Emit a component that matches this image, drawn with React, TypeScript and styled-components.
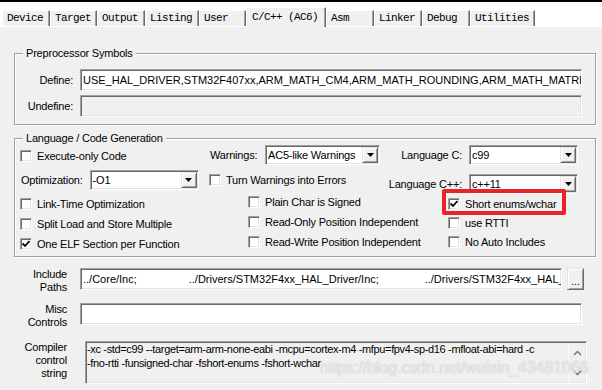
import React from 'react';
import styled, { createGlobalStyle, css } from 'styled-components';

const GlobalStyle = createGlobalStyle`
  html, body { margin: 0; padding: 0; background: #f0f0f0; }
  body {
    font-family: "Liberation Sans", Arial, sans-serif;
    font-size: 11px;
    color: #000;
  }
`;

const sunken = css`
  box-sizing: border-box;
  border-style: solid;
  border-width: 1px;
  border-color: #a0a0a0 #ffffff #ffffff #a0a0a0;
  box-shadow: inset 1px 1px 0 #696969, inset -1px -1px 0 #e3e3e3;
`;

const raised = css`
  box-sizing: border-box;
  border-style: solid;
  border-width: 1px;
  border-color: #e3e3e3 #696969 #696969 #e3e3e3;
  box-shadow: inset 1px 1px 0 #ffffff, inset -1px -1px 0 #a0a0a0;
  background: #f0f0f0;
`;

const Window = styled.div`
  position: relative;
  width: 602px;
  height: 390px;
  overflow: hidden;
  box-sizing: border-box;
  border-top: 2px solid #000;
  background: #f0f0f0;
  letter-spacing: -0.2px;
`;

const TabStrip = styled.div`
  display: flex;
  align-items: flex-end;
  height: 24px;
  padding-left: 2px;
  background: #fff;
`;

const Tab = styled.div<{ $w: number; $active?: boolean }>`
  position: relative;
  z-index: ${p => (p.$active ? 1 : 0)};
  box-sizing: border-box;
  width: ${p => p.$w}px;
  height: ${p => (p.$active ? 20 : 16)}px;
  margin-bottom: ${p => (p.$active ? -1 : 0)}px;
  padding: ${p => (p.$active ? '3px 0 0 5px' : '1px 0 0 4px')};
  background: #f0f0f0;
  border-left: 1px solid #fff;
  border-top: 1px solid #fff;
  border-right: 1px solid #696969;
  box-shadow: inset -1px 0 0 #a0a0a0;
  font-family: "Liberation Mono", "DejaVu Sans Mono", monospace;
  font-size: 11px;
  letter-spacing: -0.6px;
  line-height: 13px;
  white-space: nowrap;
`;

const Page = styled.div`
  border-top: 1px solid #fff;
  padding: 0 6px 0 14px;
`;

const Group = styled.div<{ $top: number }>`
  margin-top: ${p => p.$top}px;
  border: 1px solid #a0a0a0;
  box-shadow: inset 1px 1px 0 #fff, 1px 1px 0 #fff;
`;

const GroupTitle = styled.div`
  width: fit-content;
  margin: -8px 0 0 8px;
  padding: 0 3px;
  background: #f0f0f0;
  line-height: 14px;
`;

const SymbolGrid = styled.div`
  display: grid;
  grid-template-columns: 58px 502px;
  column-gap: 7px;
  row-gap: 4px;
  align-items: center;
  padding: 9px 0 7px 0;
`;

const Label = styled.div`
  text-align: right;
  white-space: nowrap;
`;

const TextBox = styled.div<{ $w: number; $disabled?: boolean }>`
  ${sunken};
  width: ${p => p.$w}px;
  height: 22px;
  padding: 0 2px;
  background: ${p => (p.$disabled ? '#f0f0f0' : '#fff')};
  line-height: 20px;
  letter-spacing: 0;
  white-space: pre;
  overflow: hidden;
`;

const Columns = styled.div`
  display: flex;
  padding: 0 0 2px 5px;
`;

const Column = styled.div<{ $w: number; $gap: number }>`
  display: flex;
  flex-direction: column;
  width: ${p => p.$w}px;
  margin-right: ${p => p.$gap}px;
`;

const ComboRow = styled.div<{ $end?: boolean; $top?: number }>`
  display: flex;
  align-items: center;
  justify-content: ${p => (p.$end ? 'flex-end' : 'space-between')};
  gap: 7px;
  margin-top: ${p => p.$top ?? 0}px;
  padding-left: 1px;
  white-space: nowrap;
`;

const Combo = styled.div<{ $w: number }>`
  ${sunken};
  display: flex;
  align-items: center;
  flex-shrink: 0;
  width: ${p => p.$w}px;
  height: 20px;
  background: #fff;
`;

const ComboText = styled.span`
  flex: 1;
  padding-left: 2px;
  white-space: nowrap;
  overflow: hidden;
`;

const DropButton = styled.div`
  ${raised};
  display: flex;
  align-items: center;
  justify-content: center;
  width: 16px;
  height: 16px;
  margin-right: 1px;
`;

const CheckRow = styled.div<{ $indent?: number; $h?: number; $top?: number }>`
  display: flex;
  align-items: center;
  gap: 5px;
  height: ${p => p.$h ?? 20}px;
  margin-left: ${p => p.$indent ?? 0}px;
  margin-top: ${p => p.$top ?? 0}px;
  white-space: nowrap;
`;

const Box = styled.div`
  ${sunken};
  display: flex;
  align-items: center;
  justify-content: center;
  flex-shrink: 0;
  width: 12px;
  height: 12px;
  background: #fff;
`;

const Marked = styled.div<{ $indent: number }>`
  position: relative;
  width: fit-content;
  margin-left: ${p => p.$indent}px;
  &::after {
    content: '';
    position: absolute;
    left: -6px;
    right: -10px;
    top: -5px;
    bottom: -2px;
    border: 4px solid #e8232b;
    border-radius: 2px;
  }
`;

const Fields = styled.div`
  display: grid;
  grid-template-columns: 53px 508px;
  column-gap: 13px;
  row-gap: 9px;
  margin-top: 11px;
`;

const FieldLabel = styled.div<{ $top?: number }>`
  text-align: right;
  line-height: 13px;
  margin-top: ${p => p.$top ?? 0}px;
`;

const FieldCell = styled.div<{ $top?: number }>`
  display: flex;
  gap: 5px;
  margin-top: ${p => p.$top ?? 0}px;
`;

const DotsButton = styled.div`
  ${raised};
  flex-shrink: 0;
  width: 17px;
  height: 22px;
  text-align: center;
  line-height: 24px;
  letter-spacing: 0;
`;

const ControlString = styled.div`
  ${sunken};
  display: flex;
  width: 502px;
  height: 43px;
  margin-left: 5px;
  background: #f0f0f0;
`;

const ControlText = styled.div`
  flex: 1;
  padding: 1px 0 0 1px;
  line-height: 13.5px;
  letter-spacing: -0.35px;
  white-space: nowrap;
  overflow: hidden;
`;

const ScrollBar = styled.div`
  display: flex;
  flex-direction: column;
  justify-content: space-between;
  align-items: center;
  width: 17px;
  margin: 1px 1px 1px 0;
  padding: 7px 0 6px;
  border-left: 1px solid #fafafa;
  box-sizing: border-box;
`;

const Watermark = styled.div`
  position: absolute;
  left: 320px;
  top: 357px;
  font-size: 16px;
  letter-spacing: -0.1px;
  white-space: nowrap;
  color: rgba(255, 255, 255, 0.75);
  text-shadow: 0 0 1px rgba(90, 90, 90, 0.5);
  pointer-events: none;
`;

const Arrow = () => (
  <svg width="7" height="4" viewBox="0 0 7 4">
    <polygon points="0,0 7,0 3.5,4" fill="#000" />
  </svg>
);

const Tick = () => (
  <svg width="8" height="8" viewBox="0 0 8 8">
    <path d="M0.5 3.5 L3 6 L7.5 1" fill="none" stroke="#000" strokeWidth="1.8" />
  </svg>
);

const Chevron = ({ up }: { up?: boolean }) => (
  <svg width="9" height="6" viewBox="0 0 9 6">
    <polyline
      points={up ? '1,5 4.5,1.5 8,5' : '1,1 4.5,4.5 8,1'}
      fill="none"
      stroke="#707070"
      strokeWidth="1.4"
    />
  </svg>
);

type CheckProps = { label: string; checked?: boolean; indent?: number; h?: number; top?: number };

const Check = ({ label, checked, indent, h, top }: CheckProps) => (
  <CheckRow $indent={indent} $h={h} $top={top}>
    <Box>{checked && <Tick />}</Box>
    <span>{label}</span>
  </CheckRow>
);

const Select = ({ w, value }: { w: number; value: string }) => (
  <Combo $w={w}>
    <ComboText>{value}</ComboText>
    <DropButton>
      <Arrow />
    </DropButton>
  </Combo>
);

const tabs = [
  { name: 'Device', w: 48 },
  { name: 'Target', w: 47 },
  { name: 'Output', w: 48 },
  { name: 'Listing', w: 54 },
  { name: 'User', w: 47 },
  { name: 'C/C++ (AC6)', w: 80, active: true },
  { name: 'Asm', w: 48 },
  { name: 'Linker', w: 48 },
  { name: 'Debug', w: 48 },
  { name: 'Utilities', w: 65 },
];

const includePaths =
  '../Core/Inc;                 ../Drivers/STM32F4xx_HAL_Driver/Inc;               ../Drivers/STM32F4xx_HAL_';

export default function App() {
  return (
    <Window>
      <GlobalStyle />
      <TabStrip>
        {tabs.map(t => (
          <Tab key={t.name} $w={t.w} $active={t.active}>
            {t.name}
          </Tab>
        ))}
      </TabStrip>
      <Page>
        <Group $top={26}>
          <GroupTitle>Preprocessor Symbols</GroupTitle>
          <SymbolGrid>
            <Label>Define:</Label>
            <TextBox $w={502}>
              USE_HAL_DRIVER,STM32F407xx,ARM_MATH_CM4,ARM_MATH_ROUNDING,ARM_MATH_MATRIX_CHECK
            </TextBox>
            <Label>Undefine:</Label>
            <TextBox $w={502} $disabled />
          </SymbolGrid>
        </Group>

        <Group $top={13}>
          <GroupTitle>Language / Code Generation</GroupTitle>
          <Columns>
            <Column $w={178} $gap={11}>
              <Check label="Execute-only Code" top={1} />
              <ComboRow $top={4}>
                <span>Optimization:</span>
                <Select w={109} value="-O1" />
              </ComboRow>
              <Check label="Link-Time Optimization" top={4} />
              <Check label="Split Load and Store Multiple" />
              <Check label="One ELF Section per Function" checked />
            </Column>
            <Column $w={171} $gap={5}>
              <ComboRow>
                <span>Warnings:</span>
                <Select w={115} value="AC5-like Warnings" />
              </ComboRow>
              <Check label="Turn Warnings into Errors" top={5} />
              <Check label="Plain Char is Signed" indent={39} top={2} />
              <Check label="Read-Only Position Independent" indent={39} />
              <Check label="Read-Write Position Independent" indent={39} />
            </Column>
            <Column $w={193} $gap={0}>
              <ComboRow $end>
                <span>Language C:</span>
                <Select w={109} value="c99" />
              </ComboRow>
              <ComboRow $end $top={9}>
                <span>Language C++:</span>
                <Select w={109} value="c++11" />
              </ComboRow>
              <Marked $indent={63}>
                <Check label="Short enums/wchar" checked h={19} />
              </Marked>
              <Check label="use RTTI" indent={63} h={19} />
              <Check label="No Auto Includes" indent={63} h={19} />
            </Column>
          </Columns>
        </Group>

        <Fields>
          <FieldLabel>
            Include
            <br />
            Paths
          </FieldLabel>
          <FieldCell>
            <TextBox $w={482}>{includePaths}</TextBox>
            <DotsButton>...</DotsButton>
          </FieldCell>
          <FieldLabel>
            Misc
            <br />
            Controls
          </FieldLabel>
          <FieldCell>
            <TextBox $w={502} />
          </FieldCell>
          <FieldLabel $top={3}>
            Compiler
            <br />
            control
            <br />
            string
          </FieldLabel>
          <FieldCell $top={3}>
            <ControlString>
              <ControlText>
                -xc -std=c99 --target=arm-arm-none-eabi -mcpu=cortex-m4 -mfpu=fpv4-sp-d16 -mfloat-abi=hard -c
                <br />
                -fno-rtti -funsigned-char -fshort-enums -fshort-wchar
              </ControlText>
              <ScrollBar>
                <Chevron up />
                <Chevron />
              </ScrollBar>
            </ControlString>
          </FieldCell>
        </Fields>
      </Page>
      <Watermark>https://blog.csdn.net/weixin_43481066</Watermark>
    </Window>
  );
}
